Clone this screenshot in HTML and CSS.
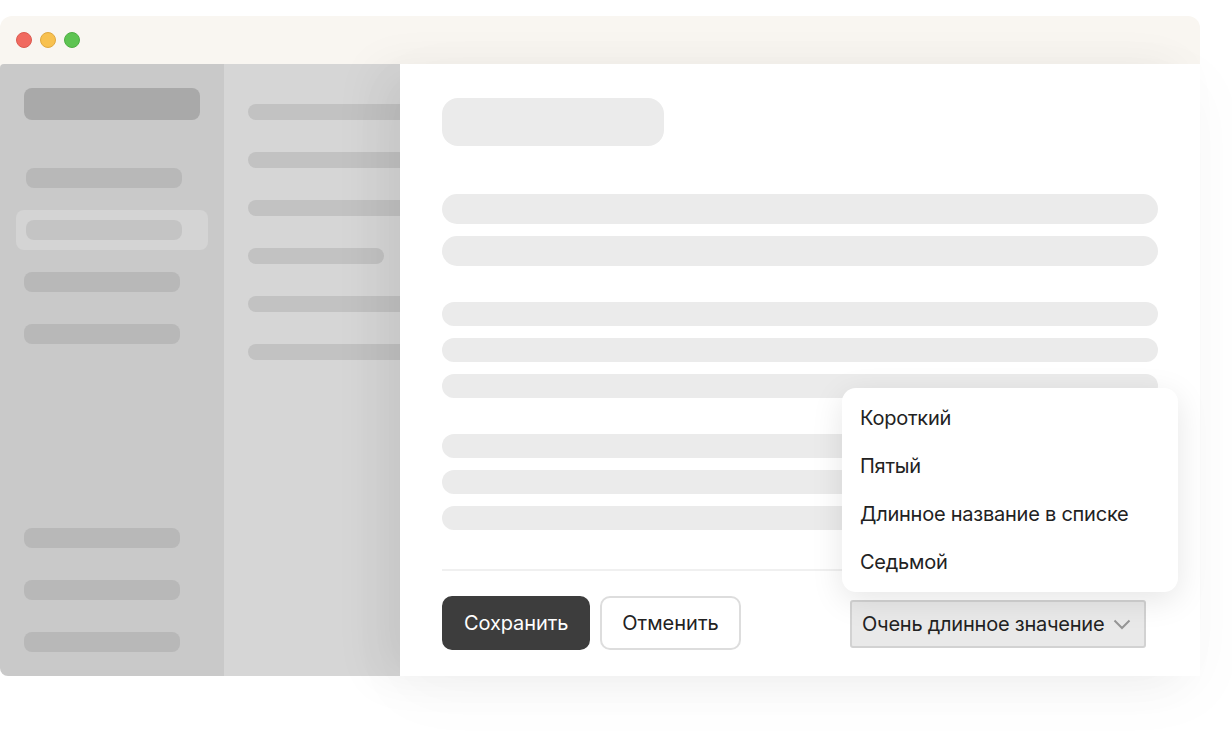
FILE: index.html
```html
<!DOCTYPE html>
<html lang="ru">
<head>
    <meta charset="UTF-8">
    <meta name="viewport" content="width=device-width, initial-scale=1.0">
    <title>Выпадающий список</title>
    <link rel="stylesheet" href="styles.css">
</head>
<body>
    <div class="window">
        <div class="titlebar">
            <span class="dot red"></span>
            <span class="dot yellow"></span>
            <span class="dot green"></span>
        </div>
        <div class="window-body">
            <div class="sidebar">
                <div class="sidebar-top">
                    <div class="sidebar-logo"></div>
                    <div class="side-item inset"></div>
                    <div class="side-selected"><div class="side-item"></div></div>
                    <div class="side-item"></div>
                    <div class="side-item"></div>
                </div>
                <div class="sidebar-bottom">
                    <div class="side-item"></div>
                    <div class="side-item"></div>
                    <div class="side-item"></div>
                </div>
            </div>
            <div class="middle">
                <div class="middle-bar"></div>
                <div class="middle-bar"></div>
                <div class="middle-bar"></div>
                <div class="middle-bar short"></div>
                <div class="middle-bar"></div>
                <div class="middle-bar"></div>
            </div>
            <div class="main">
                <div class="main-title"></div>
                <div class="line-group tall">
                    <div class="line"></div>
                    <div class="line"></div>
                </div>
                <div class="line-group">
                    <div class="line"></div>
                    <div class="line"></div>
                    <div class="line"></div>
                </div>
                <div class="line-group">
                    <div class="line"></div>
                    <div class="line"></div>
                    <div class="line"></div>
                </div>
                <div class="footer">
                    <div class="buttons">
                        <button class="button primary">Сохранить</button>
                        <button class="button secondary">Отменить</button>
                    </div>
                    <div class="select-wrap">
                        <ul class="dropdown">
                            <li>Короткий</li>
                            <li>Пятый</li>
                            <li>Длинное название в списке</li>
                            <li>Седьмой</li>
                        </ul>
                        <div class="select">
                            <span>Очень длинное значение</span>
                            <svg class="chevron" width="18" height="11" viewBox="0 0 18 11">
                                <path d="M1.5 1.5L9 9l7.5-7.5" fill="none" stroke="#969696" stroke-width="2"/>
                            </svg>
                        </div>
                    </div>
                </div>
            </div>
        </div>
    </div>
</body>
</html>
```

FILE: styles.css
```css
* {
    margin: 0;
    padding: 0;
    box-sizing: border-box;
}

body {
    font-family: 'Inter', 'Liberation Sans', sans-serif;
    background: #ffffff;
    color: #222222;
    height: 740px;
    overflow: hidden;
}

.window {
    width: 1200px;
    height: 660px;
    margin-top: 16px;
    display: flex;
    flex-direction: column;
}

.titlebar {
    height: 48px;
    flex: none;
    display: flex;
    align-items: center;
    gap: 8px;
    padding-left: 16px;
    background: #f9f6f1;
    border-radius: 12px 12px 0 0;
}

.dot {
    width: 16px;
    height: 16px;
    border-radius: 50%;
    border: 1px solid;
}

.dot.red {
    background: #f16a60;
    border-color: #dc5a50;
}

.dot.yellow {
    background: #f8c14f;
    border-color: #e0a83f;
}

.dot.green {
    background: #5ec452;
    border-color: #4fae44;
}

.window-body {
    flex: 1;
    display: flex;
    background: linear-gradient(#f9f6f1 8px, transparent 8px);
}

.sidebar {
    width: 224px;
    flex: none;
    display: flex;
    flex-direction: column;
    justify-content: space-between;
    padding: 24px 0;
    background: #c9c9c9;
    border-radius: 4px 0 0 8px;
}

.sidebar-top,
.sidebar-bottom {
    display: flex;
    flex-direction: column;
    gap: 32px;
    padding-left: 24px;
}

.sidebar-logo {
    width: 176px;
    height: 32px;
    margin-bottom: 16px;
    background: #a9a9a9;
    border-radius: 8px;
}

.side-item {
    width: 156px;
    height: 20px;
    background: #b8b8b8;
    border-radius: 8px;
}

.side-item.inset {
    margin-left: 2px;
}

.side-selected {
    width: 192px;
    height: 40px;
    margin: -10px 0 -10px -8px;
    padding: 10px;
    background: #d4d4d4;
    border-radius: 8px;
}

.side-selected .side-item {
    background: #c4c4c4;
}

.middle {
    width: 176px;
    flex: none;
    display: flex;
    flex-direction: column;
    gap: 32px;
    padding: 40px 0 0 24px;
    background: #d6d6d6;
    overflow: hidden;
}

.middle-bar {
    width: 200px;
    height: 16px;
    flex: none;
    background: #c2c2c2;
    border-radius: 8px;
}

.middle-bar.short {
    width: 136px;
}

.main {
    flex: 1;
    position: relative;
    display: flex;
    flex-direction: column;
    padding: 34px 42px 0;
    background: #ffffff;
    box-shadow: -24px 2px 44px rgba(0, 0, 0, 0.055), 0 16px 64px rgba(0, 0, 0, 0.03);
}

.main-title {
    width: 222px;
    height: 48px;
    margin-bottom: 48px;
    background: #ebebeb;
    border-radius: 16px;
}

.line-group {
    display: flex;
    flex-direction: column;
    gap: 12px;
    margin-bottom: 36px;
}

.line {
    height: 24px;
    background: #ebebeb;
    border-radius: 12px;
}

.line-group.tall .line {
    height: 30px;
    border-radius: 15px;
}

.footer {
    display: flex;
    justify-content: space-between;
    align-items: center;
    margin-top: 3px;
    padding: 25px 12px 0 0;
    border-top: 2px solid #f0f0f0;
}

.buttons {
    display: flex;
    gap: 10px;
}

.button {
    height: 54px;
    padding: 0 20px;
    font-family: inherit;
    font-size: 20px;
    letter-spacing: -0.1px;
    color: #222222;
    background: #ffffff;
    border: 2px solid #dddddd;
    border-radius: 10px;
}

.button.primary {
    color: #ffffff;
    background: #3d3d3d;
    border-color: #3d3d3d;
}

.button.secondary {
    letter-spacing: 0;
}

.select-wrap {
    position: relative;
    margin-top: 2px;
}

.select {
    width: 296px;
    height: 48px;
    display: flex;
    align-items: center;
    justify-content: space-between;
    padding: 0 13px 0 10px;
    font-size: 20px;
    letter-spacing: -0.23px;
    background: #e9e9e9;
    border: 2px solid #d2d2d2;
    border-radius: 3px;
}

.dropdown {
    position: absolute;
    right: -32px;
    bottom: 56px;
    width: 336px;
    padding: 6px 0;
    list-style: none;
    font-size: 20px;
    letter-spacing: -0.24px;
    background: #ffffff;
    border-radius: 14px;
    box-shadow: 0 8px 32px rgba(0, 0, 0, 0.1);
}

.dropdown li {
    height: 48px;
    line-height: 48px;
    padding-left: 18px;
}
```
